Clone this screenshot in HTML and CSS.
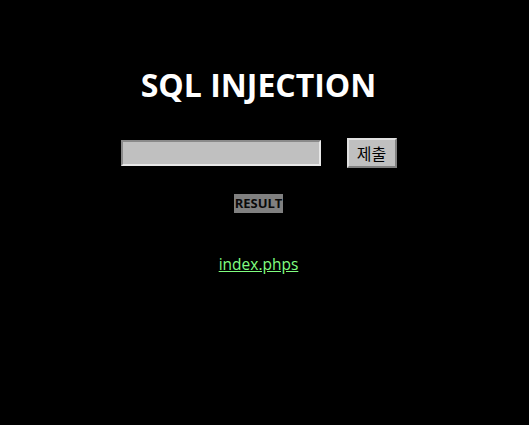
FILE: index.html
```html
<!DOCTYPE html>
<html>
<head>
<meta charset="utf-8">
<link rel="stylesheet" href="styles.css">
</head>
<body>
<div class="page">
  <h1 class="title">SQL INJECTION</h1>
  <form class="form">
    <input class="field" type="text" name="query">
    <button class="submit" type="button">제출</button>
  </form>
  <div class="result-row"><span class="result">RESULT</span></div>
  <div class="link-row"><a class="source" href="#">index.phps</a></div>
</div>
</body>
</html>
```
FILE: styles.css
```css
html, body {
  margin: 0;
  padding: 0;
  background: #000;
}
.page {
  width: 517px;
  text-align: center;
  font-family: "Open Sans", "Noto Sans CJK KR", sans-serif;
  color: #fff;
  padding-top: 60px;
}
.title {
  margin: 0;
  font-size: 32px;
  font-weight: bold;
  line-height: 50px;
  color: #fff;
}
.form {
  margin: 28px 0 0 0;
  display: flex;
  justify-content: center;
  align-items: center;
  gap: 26px;
}
.field {
  box-sizing: border-box;
  width: 200px;
  height: 26px;
  margin: 0;
  padding: 0 2px;
  background: #c0c0c0;
  border: 2px solid;
  border-color: #8a8a8a #e8e8e8 #e8e8e8 #8a8a8a;
}
.submit {
  box-sizing: border-box;
  width: 50px;
  height: 30px;
  margin: 0;
  padding: 0;
  background: #c0c0c0;
  border: 2px solid;
  border-color: #e0e0e0 #808080 #808080 #e0e0e0;
  font-family: "Noto Sans CJK KR", sans-serif;
  font-size: 16px;
  color: #000;
}
.result-row {
  margin-top: 25px;
  line-height: 19px;
}
.result {
  display: inline-block;
  background: #808080;
  color: #0a0a0a;
  font-weight: bold;
  font-size: 13px;
  line-height: 19px;
  padding: 0 1px;
}
.link-row {
  margin-top: 40px;
  line-height: 22px;
}
.source {
  color: #80ff80;
  font-size: 15.5px;
}
```
